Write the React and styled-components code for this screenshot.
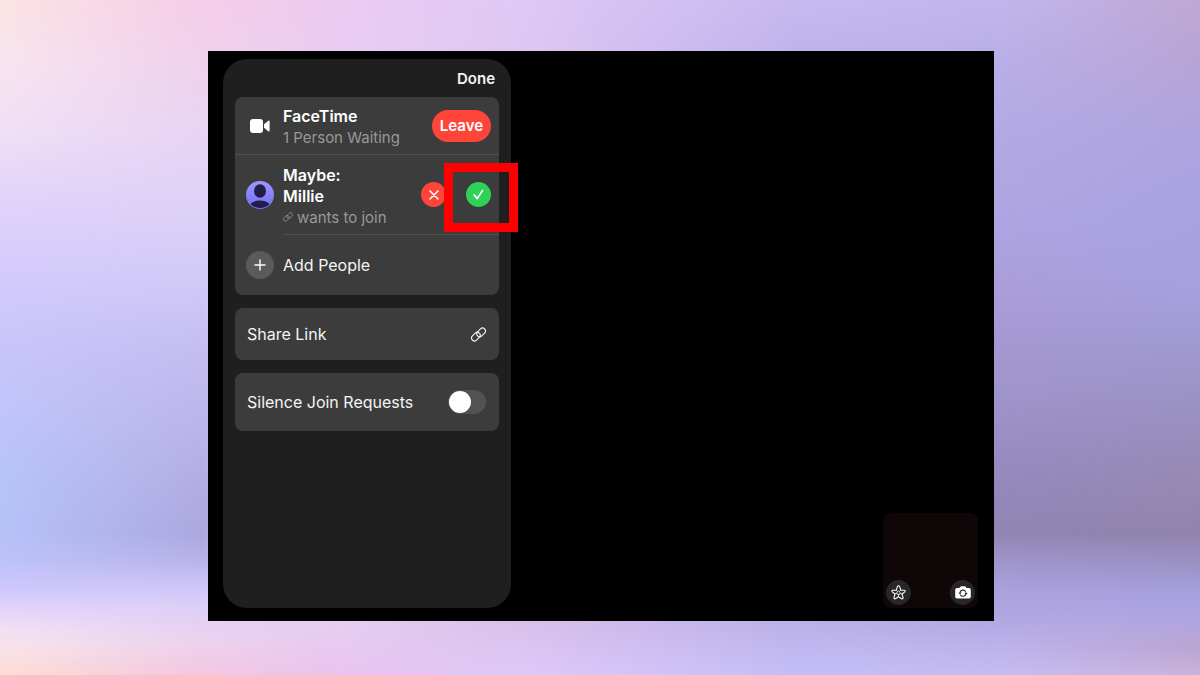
import React, { useState } from "react";
import styled, { createGlobalStyle } from "styled-components";

const GlobalStyle = createGlobalStyle`
   * {
      box-sizing: border-box;
   }

   body {
      margin: 0;
      background: #d0caf7;
      color: #f4f4f4;
      font-family: Inter, "Liberation Sans", sans-serif;
      font-size: 16px;
      line-height: 21px;
   }

   button {
      margin: 0;
      padding: 0;
      border: 0;
      background: none;
      color: inherit;
      font: inherit;
      cursor: pointer;
   }
`;

// Vertical colour columns, painted from right to left. Each one is solid
// up to `from` and fades out at `to`.
const columns = [
   {
      from: 100,
      to: 100,
      stops:
         "#bfa8d2, #b8a5d6 9%, #aea4e0 20%, #a9a2e2 33%, #a7a1e0 42%, #a09ad2 51%, #998fbf 63%, #978ab3 71%, #9184ac 79%, #9a90c2 83%, #a7a1e0 88%, #b1a6e0 92%, #bba6d2 96%, #cab4da"
   },
   {
      from: 83,
      to: 100,
      stops:
         "#c0b6ec, #b9aee7 9%, #b1a8e3 22%, #aea4e1 33%, #a99cd8 44%, #9f93cb 59%, #9488bd 71%, #9085b2 79%, #9f94cb 83%, #a99fdc 87%, #b3a8e3 92%, #bdb3ec 96%, #c5bcf2"
   },
   { from: 67, to: 83, stops: "#c6b9f0, #bfb2ec 8%, #b9aee6 91%, #c3bef8" },
   { from: 42, to: 67, stops: "#e0c9f4, #dfc8f2 8%, #dac1ea 92%, #e0c9f8" },
   { from: 28, to: 42, stops: "#edcaf1, #eaccf3 8%, #e6cef1 92%, #eac3ef" },
   {
      from: 17,
      to: 28,
      stops:
         "#f5cde8, #f0d1ec 9%, #e8d4f4 19%, #dfd2f7 30%, #d0caf7 42%, #c5bef3 51%, #bbb5ea 63%, #b1abe3 74%, #aca8e0 79%, #b9b3ea 83%, #cfc7f8 87%, #ddd0f8 90%, #ecd2ef 95%, #f3c7e0"
   },
   {
      from: 0,
      to: 17,
      stops:
         "#fbe3e3, #f8e4ee 9%, #efdff6 20%, #e0d2fa 30%, #d3cafb 41%, #c9c5fa 51%, #bdc4fa 63%, #b6c4f9 71%, #b5c2f8 79%, #bdc2fa 83%, #cdc6fb 87%, #e2d2fa 90%, #f0dff5 93%, #f9e3e8 96%, #fddcd3"
   }
];

const Page = styled.main`
   position: relative;
   display: flex;
   min-height: 100vh;
   padding: 51px 206px 54px 208px;
   isolation: isolate;
`;

const Backdrop = styled.div`
   position: absolute;
   inset: 0;
   z-index: -1;
   background: linear-gradient(${p => p.$stops});
   mask-image: linear-gradient(
      90deg,
      #000 ${p => p.$from}%,
      transparent ${p => p.$to}%
   );
`;

const Device = styled.section`
   flex: 1;
   display: flex;
   justify-content: space-between;
   padding: 8px 16px 13px 15px;
   background: #000;
`;

const Panel = styled.aside`
   width: 288px;
   padding: 0 12px 12px;
   border-radius: 24px;
   background: #1f1f1f;
`;

const PanelHeader = styled.header`
   display: flex;
   justify-content: flex-end;
   align-items: center;
   height: 38px;
   padding-right: 4px;
`;

const DoneButton = styled.button`
   font-size: 15px;
   font-weight: 600;
`;

const Card = styled.div`
   margin-bottom: 13px;
   border-radius: 8px;
   background: #3c3c3c;
`;

const Row = styled.div`
   display: flex;
   align-items: center;
   gap: 9px;
   min-height: ${p => p.$height}px;
   padding: 0 8px 0 11px;
`;

const CallRow = styled(Row)`
   border-bottom: 1px solid #505050;
`;

const IconSlot = styled.span`
   display: flex;
   justify-content: center;
   align-items: center;
   width: 28px;
   height: 28px;
   border-radius: 50%;
   background: ${p => p.$fill || "none"};
`;

const Info = styled.div`
   flex: 1;
   padding-top: ${p => p.$drop}px;
`;

const Name = styled.h2`
   margin: 0;
   color: #fff;
   font-size: 16px;
   font-weight: 600;
`;

const Status = styled.p`
   display: flex;
   align-items: center;
   gap: 4px;
   margin: 0;
   color: #98989b;
   font-size: 15px;
`;

const LeaveButton = styled.button`
   width: 59px;
   height: 32px;
   border-radius: 16px;
   background: #ff453a;
   color: #fff;
   font-size: 15px;
   font-weight: 600;
`;

const Actions = styled.div`
   display: flex;
   gap: 20px;
`;

const RoundButton = styled.button`
   display: flex;
   justify-content: center;
   align-items: center;
   width: 25px;
   height: 25px;
   border-radius: 50%;
   background: ${p => p.$color};
`;

const Highlighted = styled.div`
   position: relative;
`;

const HighlightBox = styled.span`
   position: absolute;
   top: -19px;
   left: -22px;
   width: 74px;
   height: 69px;
   border: 9px solid #f00;
   pointer-events: none;
`;

const Divider = styled.hr`
   height: 1px;
   margin: 0 0 0 48px;
   border: 0;
   background: #505050;
`;

const AddButton = styled.button`
   display: flex;
   align-items: center;
   gap: 9px;
   width: 100%;
   height: 60px;
   padding: 0 11px;
`;

const ShareButton = styled.button`
   display: flex;
   justify-content: space-between;
   align-items: center;
   width: 100%;
   height: 52px;
   padding: 0 13px 0 12px;
`;

const ToggleRow = styled.label`
   display: flex;
   justify-content: space-between;
   align-items: center;
   height: 58px;
   padding: 0 13px 0 12px;
`;

const Toggle = styled.input`
   appearance: none;
   width: 38px;
   height: 24px;
   margin: 0;
   padding: 1px;
   border-radius: 12px;
   background: ${p => (p.checked ? "#30d158" : "#525255")};

   &::before {
      content: "";
      display: block;
      width: 22px;
      height: 22px;
      margin-left: ${p => (p.checked ? 14 : 0)}px;
      border-radius: 50%;
      background: #fff;
   }
`;

const SelfView = styled.div`
   display: flex;
   justify-content: space-between;
   align-items: flex-end;
   align-self: flex-end;
   width: 95px;
   height: 95px;
   padding: 3px;
   border-radius: 8px;
   background: #0e0607;
`;

const VideoIcon = () => (
   <svg width="20" height="14" viewBox="0 0 20 14" fill="#fff">
      <rect width="13" height="14" rx="3" />
      <path d="M14 5.2 18.3 1.7Q19.6 1 19.6 2.6V11.4Q19.6 13 18.3 12.3L14 8.8Z" />
   </svg>
);

const AvatarIcon = () => (
   <svg width="28" height="28" viewBox="0 0 28 28">
      <defs>
         <linearGradient id="avatar" x1="0" y1="0" x2="0" y2="1">
            <stop offset="0" stopColor="#9d98ff" />
            <stop offset="1" stopColor="#706cf0" />
         </linearGradient>
         <clipPath id="avatarClip">
            <circle cx="14" cy="14" r="13" />
         </clipPath>
      </defs>
      <circle cx="14" cy="14" r="14" fill="url(#avatar)" />
      <g fill="#201d48" clipPath="url(#avatarClip)">
         <ellipse cx="14" cy="10" rx="6" ry="6.7" />
         <ellipse cx="14" cy="26.5" rx="11" ry="7" />
      </g>
   </svg>
);

const LinkIcon = ({ size, color }) => (
   <svg
      width={size}
      height={size}
      viewBox="0 0 24 24"
      fill="none"
      stroke={color}
      strokeWidth="1.8"
   >
      <g transform="rotate(-44 12 12)">
         <rect x="-1.2" y="6.8" width="15.6" height="9.4" rx="4.7" />
         <rect x="9.6" y="7.8" width="15.6" height="9.4" rx="4.7" />
      </g>
   </svg>
);

const CrossIcon = () => (
   <svg width="10" height="10" viewBox="0 0 10 10" stroke="#fff">
      <path d="M1 1 9 9M9 1 1 9" strokeWidth="1.6" strokeLinecap="round" />
   </svg>
);

const CheckIcon = () => (
   <svg width="11" height="11" viewBox="0 0 11 11" fill="none" stroke="#fff">
      <path
         d="M1.2 6 4.2 9.6 9.6 1.4"
         strokeWidth="1.7"
         strokeLinecap="round"
         strokeLinejoin="round"
      />
   </svg>
);

const PlusIcon = () => (
   <svg width="12" height="12" viewBox="0 0 12 12" stroke="#fff">
      <path d="M6 1V11M1 6H11" strokeWidth="1.4" strokeLinecap="round" />
   </svg>
);

const EffectsIcon = () => (
   <svg
      width="15"
      height="15"
      viewBox="0 0 24 24"
      fill="none"
      stroke="#fff"
      strokeWidth="1.7"
      strokeLinejoin="round"
   >
      <path d="M12 1.2Q13.4 1.2 14 3L15.6 8.2 21 8.4Q23.6 9 22 11L17.6 14.4 19.3 20Q19.6 22.8 17 22L12 18.8 7 22Q4.4 22.8 4.7 20L6.4 14.4 2 11Q.4 9 3 8.4L8.4 8.2 10 3Q10.6 1.2 12 1.2Z" />
      <path
         d="M8.4 8.2 10.4 10.3M15.6 8.2 13.6 10.3M17.6 14.4 14.8 13.4M6.4 14.4 9.2 13.4M12 18.8V15.6M12 9.6 14.8 11.8 13.8 15.2H10.2L9.2 11.8Z"
         strokeWidth="1.3"
      />
   </svg>
);

const FlipCameraIcon = () => (
   <svg width="16" height="13" viewBox="0 0 16 13">
      <path
         d="M2 2H4.3L5.3.7Q5.7.2 6.4.2H9.6Q10.3.2 10.7.7L11.7 2H14Q15.8 2 15.8 3.8V10.8Q15.8 12.6 14 12.6H2Q.2 12.6.2 10.8V3.8Q.2 2 2 2Z"
         fill="#fff"
      />
      <path
         d="M5 6.4A3.1 3.1 0 0 1 10.7 5.7M11 8A3.1 3.1 0 0 1 5.3 8.7"
         fill="none"
         stroke="#222"
         strokeWidth="1.1"
      />
      <path d="M3.4 6.4H6.6L5 8.4ZM9.4 8H12.6L11 6Z" fill="#222" />
   </svg>
);

const App = () => {
   const [silenced, setSilenced] = useState(false);

   return (
      <>
         <GlobalStyle />
         <Page>
            {columns.map(({ from, to, stops }) => (
               <Backdrop key={from} $from={from} $to={to} $stops={stops} />
            ))}
            <Device>
               <Panel>
                  <PanelHeader>
                     <DoneButton>Done</DoneButton>
                  </PanelHeader>
                  <Card>
                     <CallRow $height={58}>
                        <IconSlot>
                           <VideoIcon />
                        </IconSlot>
                        <Info $drop={2}>
                           <Name>FaceTime</Name>
                           <Status>1 Person Waiting</Status>
                        </Info>
                        <LeaveButton>Leave</LeaveButton>
                     </CallRow>
                     <Row $height={79}>
                        <IconSlot>
                           <AvatarIcon />
                        </IconSlot>
                        <Info $drop={3}>
                           <Name>
                              Maybe:
                              <br />
                              Millie
                           </Name>
                           <Status>
                              <LinkIcon size={10} color="#98989b" />
                              wants to join
                           </Status>
                        </Info>
                        <Actions>
                           <RoundButton $color="#ff453a" aria-label="Decline">
                              <CrossIcon />
                           </RoundButton>
                           <Highlighted>
                              <RoundButton $color="#30d158" aria-label="Accept">
                                 <CheckIcon />
                              </RoundButton>
                              <HighlightBox />
                           </Highlighted>
                        </Actions>
                     </Row>
                     <Divider />
                     <AddButton>
                        <IconSlot $fill="#5a5a5a">
                           <PlusIcon />
                        </IconSlot>
                        Add People
                     </AddButton>
                  </Card>
                  <Card>
                     <ShareButton>
                        Share Link
                        <LinkIcon size={15} color="#f4f4f4" />
                     </ShareButton>
                  </Card>
                  <Card>
                     <ToggleRow>
                        Silence Join Requests
                        <Toggle
                           type="checkbox"
                           checked={silenced}
                           onChange={e => setSilenced(e.target.checked)}
                        />
                     </ToggleRow>
                  </Card>
               </Panel>
               <SelfView>
                  <RoundButton $color="#282627" aria-label="Effects">
                     <EffectsIcon />
                  </RoundButton>
                  <RoundButton $color="#282627" aria-label="Flip camera">
                     <FlipCameraIcon />
                  </RoundButton>
               </SelfView>
            </Device>
         </Page>
      </>
   );
};

export default App;
